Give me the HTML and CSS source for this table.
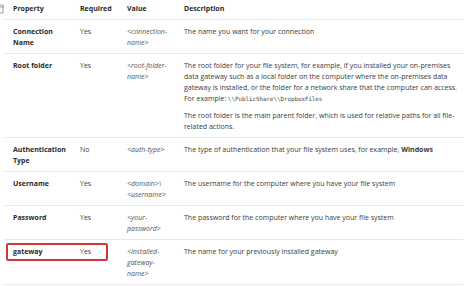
FILE: index.html
```html
<!DOCTYPE html>
<html>
<head>
<meta charset="utf-8">
<link rel="stylesheet" href="styles.css">
</head>
<body>
<div class="page">
  <svg class="corner-icon" width="8" height="12" viewBox="0 0 8 12"><path d="M1 2 L6 2 L6 10 L1 10 Z M3 4 L7 4" fill="none" stroke="#9a9a9a" stroke-width="1"/></svg>
  <table class="props">
    <colgroup>
      <col class="c-prop"><col class="c-req"><col class="c-val"><col class="c-desc">
    </colgroup>
    <thead>
      <tr><th>Property</th><th>Required</th><th>Value</th><th>Description</th></tr>
    </thead>
    <tbody>
      <tr>
        <td class="name">Connection Name</td>
        <td>Yes</td>
        <td class="val">&lt;connection-name&gt;</td>
        <td>The name you want for your connection</td>
      </tr>
      <tr>
        <td class="name">Root folder</td>
        <td>Yes</td>
        <td class="val">&lt;root-folder-name&gt;</td>
        <td>
          <p>The root folder for your file system, for example, if you installed your on-premises data gateway such as a local folder on the computer where the on-premises data gateway is installed, or the folder for a network share that the computer can access. For example: <code>\\PublicShare\\DropboxFiles</code></p>
          <p>The root folder is the main parent folder, which is used for relative paths for all file-related actions.</p>
        </td>
      </tr>
      <tr>
        <td class="name">Authentication Type</td>
        <td>No</td>
        <td class="val">&lt;auth-type&gt;</td>
        <td>The type of authentication that your file system uses, for example, <b>Windows</b></td>
      </tr>
      <tr>
        <td class="name">Username</td>
        <td>Yes</td>
        <td class="val">&lt;domain&gt;\<wbr>&lt;username&gt;</td>
        <td>The username for the computer where you have your file system</td>
      </tr>
      <tr>
        <td class="name">Password</td>
        <td>Yes</td>
        <td class="val">&lt;your-password&gt;</td>
        <td>The password for the computer where you have your file system</td>
      </tr>
      <tr>
        <td class="name boxed">gateway<span class="highlight"></span></td>
        <td>Yes</td>
        <td class="val">&lt;installed-gateway-name&gt;</td>
        <td>The name for your previously installed gateway</td>
      </tr>
    </tbody>
  </table>
</div>
</body>
</html>
```
FILE: styles.css
```css
html, body {
  margin: 0;
  padding: 0;
  background: #ffffff;
}
body {
  font-family: "Open Sans", "Noto Sans", sans-serif;
  font-size: 7px;
  color: #3b3b3b;
}
.page {
  position: relative;
  width: 474px;
  height: 286px;
  overflow: hidden;
}
.corner-icon {
  position: absolute;
  left: -3px;
  top: 3px;
}
.props {
  margin-left: 4px;
  width: 459px;
  table-layout: fixed;
  border-collapse: collapse;
}
.c-prop { width: 67px; }
.c-req { width: 47px; }
.c-val { width: 57px; }
.c-desc { width: 288px; }
.props th, .props td {
  text-align: left;
  vertical-align: top;
  line-height: 11px;
  padding: 6px 6px 5px 9px;
  border-bottom: 1px solid #e9e9e9;
}
.props th {
  font-weight: 700;
  color: #2a2a2a;
  padding-top: 3px;
  padding-bottom: 5px;
}
.name {
  font-weight: 700;
  color: #2a2a2a;
}
.props td.val {
  font-style: italic;
  color: #555;
  padding-right: 3px;
}
.props p {
  margin: 0 0 6px 0;
}
.props p:last-child {
  margin-bottom: 0;
}
code {
  font-family: "DejaVu Sans Mono", "Liberation Mono", monospace;
  font-size: 5.8px;
  line-height: 1;
  color: #444;
}
.boxed {
  position: relative;
}
.highlight {
  position: absolute;
  left: 2px;
  top: 3px;
  width: 98px;
  height: 14px;
  border: 2px solid #d2373b;
  border-radius: 2px;
}
```
